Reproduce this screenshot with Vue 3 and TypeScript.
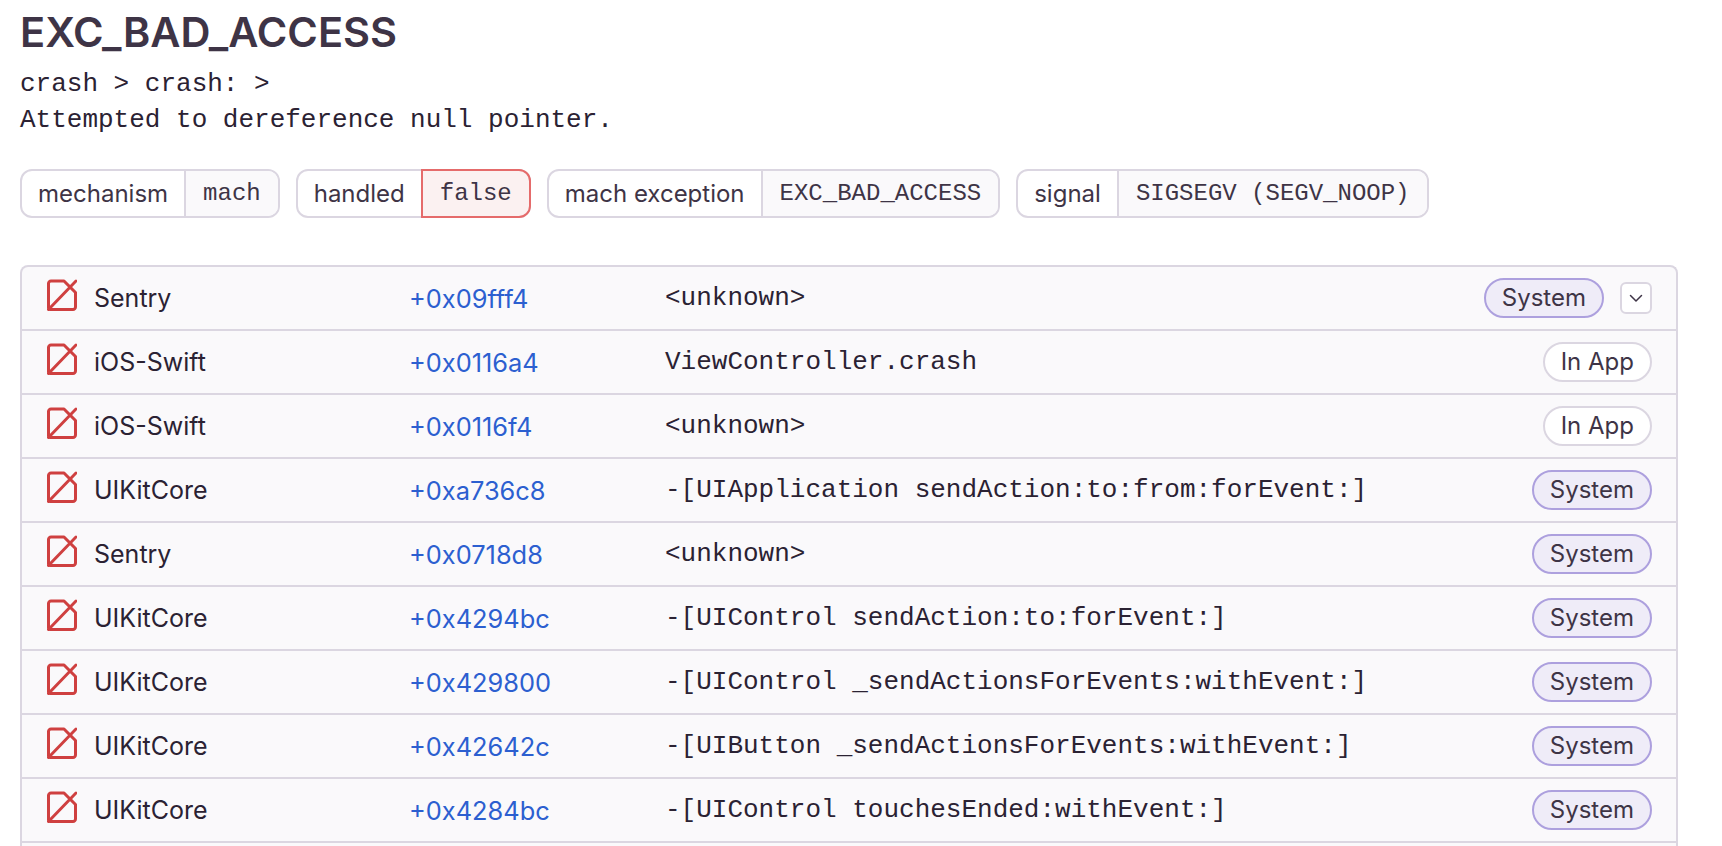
<script setup lang="ts">
interface Frame {
  module: string
  address: string
  fn: string
  inApp?: boolean
}

interface Tag {
  key: string
  value: string
  danger?: boolean
}

const tags: Tag[] = [
  { key: 'mechanism', value: 'mach' },
  { key: 'handled', value: 'false', danger: true },
  { key: 'mach exception', value: 'EXC_BAD_ACCESS' },
  { key: 'signal', value: 'SIGSEGV (SEGV_NOOP)' },
]

const frames: Frame[] = [
  { module: 'Sentry', address: '+0x09fff4', fn: '<unknown>' },
  { module: 'iOS-Swift', address: '+0x0116a4', fn: 'ViewController.crash', inApp: true },
  { module: 'iOS-Swift', address: '+0x0116f4', fn: '<unknown>', inApp: true },
  { module: 'UIKitCore', address: '+0xa736c8', fn: '-[UIApplication sendAction:to:from:forEvent:]' },
  { module: 'Sentry', address: '+0x0718d8', fn: '<unknown>' },
  { module: 'UIKitCore', address: '+0x4294bc', fn: '-[UIControl sendAction:to:forEvent:]' },
  { module: 'UIKitCore', address: '+0x429800', fn: '-[UIControl _sendActionsForEvents:withEvent:]' },
  { module: 'UIKitCore', address: '+0x42642c', fn: '-[UIButton _sendActionsForEvents:withEvent:]' },
  { module: 'UIKitCore', address: '+0x4284bc', fn: '-[UIControl touchesEnded:withEvent:]' },
]
</script>

<template>
  <div class="page">
    <h1 class="title">EXC_BAD_ACCESS</h1>
    <p class="crumb">crash &gt; crash: &gt;</p>
    <p class="message">Attempted to dereference null pointer.</p>

    <div class="tags">
      <div v-for="tag in tags" :key="tag.key" class="tag" :class="{ danger: tag.danger }">
        <span class="tag-key">{{ tag.key }}</span>
        <span class="tag-value">{{ tag.value }}</span>
      </div>
    </div>

    <div class="frames">
      <div v-for="(frame, i) in frames" :key="i" class="frame">
        <svg class="missing" viewBox="0 0 30 32" fill="none" stroke="#cf4040" stroke-width="3" stroke-linecap="round" stroke-linejoin="round">
          <path d="M17 2H4a2.500 2.500 0 0 0-2.500 2.500V28.500A2 2 0 0 0 3.500 30.500H26a2.500 2.500 0 0 0 2.500-2.500V13.500L17 2" />
          <path d="M1.500 30.500 29 2" />
        </svg>
        <span class="module">{{ frame.module }}</span>
        <span class="address">{{ frame.address }}</span>
        <span class="fn">{{ frame.fn }}</span>
        <span class="badges">
          <span class="badge" :class="frame.inApp ? 'app' : 'system'">{{ frame.inApp ? 'In App' : 'System' }}</span>
          <span v-if="i === 0" class="toggle">
            <svg viewBox="0 0 16 16" width="16" height="16" fill="none" stroke="#3e3446" stroke-width="1.500" stroke-linecap="round" stroke-linejoin="round">
              <path d="M2.500 5.500 8 11l5.500-5.500" />
            </svg>
          </span>
        </span>
      </div>
    </div>
  </div>
</template>

<style>
html,
body {
  margin: 0;
  height: 100%;
  overflow: hidden;
  background: #fff;
}
</style>

<style scoped>
.page {
  box-sizing: border-box;
  width: 1722px;
  padding: 0 44px 0 20px;
  color: #3e3446;
  font-family: Inter, "Noto Sans", sans-serif;
}

.title {
  margin: 0;
  padding-top: 8px;
  font-size: 41.500px;
  line-height: 48px;
  font-weight: 600;
  letter-spacing: 0;
}

.crumb,
.message {
  margin: 0;
  font-family: "Liberation Mono", monospace;
  font-size: 26px;
  line-height: 36px;
  color: #2b2233;
}

.crumb {
  margin-top: 10px;
}

.tags {
  display: flex;
  gap: 16px;
  margin-top: 31px;
}

.tag {
  display: flex;
  height: 49px;
  box-sizing: border-box;
  border: 2px solid #dbd6e1;
  border-radius: 12px;
  font-size: 24px;
  line-height: 45px;
}

.tag-key {
  padding: 0 16px;
}

.tag-value {
  padding: 0 17px;
  background: #faf9fb;
  border-left: 2px solid #dbd6e1;
  border-radius: 0 10px 10px 0;
  font-family: "Liberation Mono", monospace;
  font-size: 24px;
}

.tag.danger .tag-value {
  background: #fbf1f1;
  border: 2px solid #e56b6b;
  border-radius: 0 12px 12px 0;
  margin: -2px -2px -2px 0;
}

.frames {
  margin-top: 47px;
  padding-bottom: 10px;
  border: 2px solid #dbd6e1;
  border-bottom: 0;
  border-radius: 8px 8px 0 0;
  background: #faf9fb;
  width: 1658px;
  box-sizing: border-box;
}

.frame {
  display: grid;
  grid-template-columns: 47px 315px 256px 1fr auto;
  align-items: center;
  height: 64px;
  box-sizing: border-box;
  padding: 0 24px 0 25px;
  border-bottom: 2px solid #dbd6e1;
}

.missing {
  width: 30px;
  height: 32px;
  margin-top: -6px;
}

.module {
  font-size: 25px;
  color: #2b2233;
}

.address {
  font-size: 25.400px;
  color: #2c5fd0;
}

.fn {
  font-family: "Liberation Mono", monospace;
  font-size: 26px;
  color: #2b2233;
}

.badges {
  display: flex;
  align-items: center;
  gap: 16px;
}

.badge {
  box-sizing: border-box;
  height: 40px;
  padding: 0 16px;
  border-radius: 20px;
  font-size: 24px;
  line-height: 36px;
  border: 2px solid #dbd6e1;
  background: #fff;
}

.badge.system {
  background: #efecf8;
  border-color: #ada0de;
}

.toggle {
  box-sizing: border-box;
  width: 32px;
  height: 32px;
  display: flex;
  align-items: center;
  justify-content: center;
  background: #fff;
  border: 2px solid #dbd6e1;
  border-radius: 6px;
}
</style>
